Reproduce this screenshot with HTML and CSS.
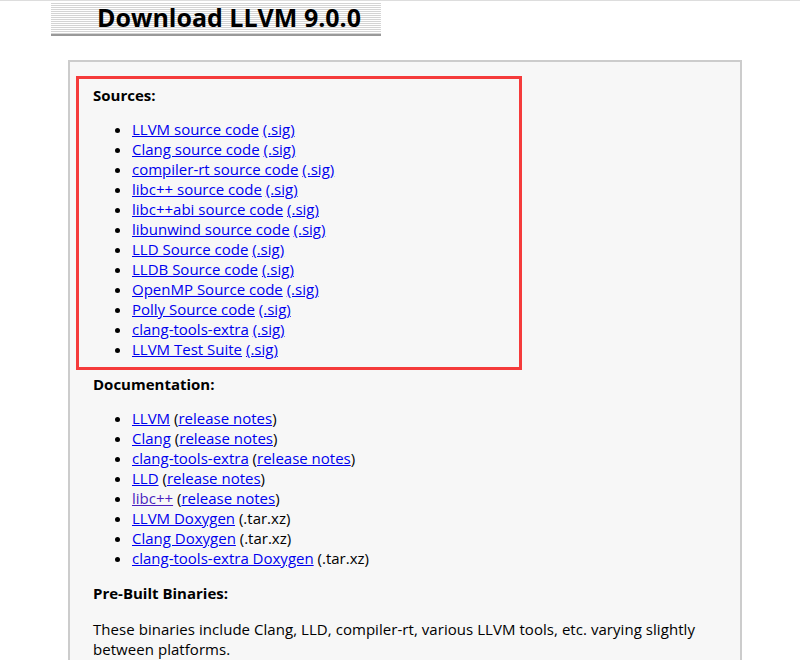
FILE: index.html
```html
<!DOCTYPE html>
<html>
<head>
<meta charset="utf-8">
<link rel="stylesheet" href="styles.css">
</head>
<body>
<div class="page">
<div class="topline"></div>
<div class="header"><h1 class="title">Download LLVM 9.0.0</h1></div>
<div class="box">
  <div class="highlight">
    <p class="label">Sources:</p>
    <ul class="list">
      <li><a href="#">LLVM source code</a> <a href="#">(.sig)</a></li>
      <li><a href="#">Clang source code</a> <a href="#">(.sig)</a></li>
      <li><a href="#">compiler-rt source code</a> <a href="#">(.sig)</a></li>
      <li><a href="#">libc++ source code</a> <a href="#">(.sig)</a></li>
      <li><a href="#">libc++abi source code</a> <a href="#">(.sig)</a></li>
      <li><a href="#">libunwind source code</a> <a href="#">(.sig)</a></li>
      <li><a href="#">LLD Source code</a> <a href="#">(.sig)</a></li>
      <li><a href="#">LLDB Source code</a> <a href="#">(.sig)</a></li>
      <li><a href="#">OpenMP Source code</a> <a href="#">(.sig)</a></li>
      <li><a href="#">Polly Source code</a> <a href="#">(.sig)</a></li>
      <li><a href="#">clang-tools-extra</a> <a href="#">(.sig)</a></li>
      <li><a href="#">LLVM Test Suite</a> <a href="#">(.sig)</a></li>
    </ul>
  </div>
  <p class="label label-doc">Documentation:</p>
  <ul class="list">
    <li><a href="#">LLVM</a> (<a href="#">release notes</a>)</li>
    <li><a href="#">Clang</a> (<a href="#">release notes</a>)</li>
    <li><a href="#">clang-tools-extra</a> (<a href="#">release notes</a>)</li>
    <li><a href="#">LLD</a> (<a href="#">release notes</a>)</li>
    <li><a href="#" class="visited">libc++</a> (<a href="#">release notes</a>)</li>
    <li><a href="#">LLVM Doxygen</a> (.tar.xz)</li>
    <li><a href="#">Clang Doxygen</a> (.tar.xz)</li>
    <li><a href="#">clang-tools-extra Doxygen</a> (.tar.xz)</li>
  </ul>
  <p class="label">Pre-Built Binaries:</p>
  <p class="text">These binaries include Clang, LLD, compiler-rt, various LLVM tools, etc. varying slightly between platforms.</p>
</div>
</div>
</body>
</html>
```
FILE: styles.css
```css
html, body {
  margin: 0;
  padding: 0;
  background: #ffffff;
}
body {
  font-family: "Open Sans", "Noto Sans", sans-serif;
  font-size: 15px;
  line-height: 20px;
  color: #000000;
}
.page {
  width: 800px;
  height: 660px;
  overflow: hidden;
}
.topline {
  height: 1px;
  background: #dddddd;
}
.header {
  margin-left: 51px;
  width: 330px;
  height: 31px;
  margin-top: 2px;
  border-bottom: 2px solid #999999;
  background: repeating-linear-gradient(to bottom, #d4d4d4 0, #d4d4d4 1px, #ffffff 1px, #ffffff 2px);
}
.title {
  margin: 0;
  padding-left: 46px;
  font-size: 25px;
  line-height: 28px;
  font-weight: bold;
  color: #000000;
}
.box {
  margin-top: 24px;
  margin-left: 68px;
  width: 674px;
  height: 600px;
  border: 2px solid #cccccc;
  border-bottom: none;
  background: #f7f7f7;
  padding: 14px 0 0 23px;
  box-sizing: border-box;
}
.highlight {
  margin-left: -17px;
  width: 446px;
  box-sizing: border-box;
  border: 3px solid #f53b3b;
  padding: 6px 0 8px 14px;
}
.label {
  margin: 0;
  font-weight: bold;
}
.label-doc {
  margin-top: 4px;
}
.list {
  margin: 14px 0 15px 0;
  padding-left: 39px;
}
.highlight .list {
  margin-bottom: 0;
}
.text {
  margin: 16px 0 0 0;
  width: 620px;
  letter-spacing: 0.05px;
}
a {
  color: #0000ee;
  text-decoration: underline;
}
a.visited {
  color: #4a1fc0;
}
```
